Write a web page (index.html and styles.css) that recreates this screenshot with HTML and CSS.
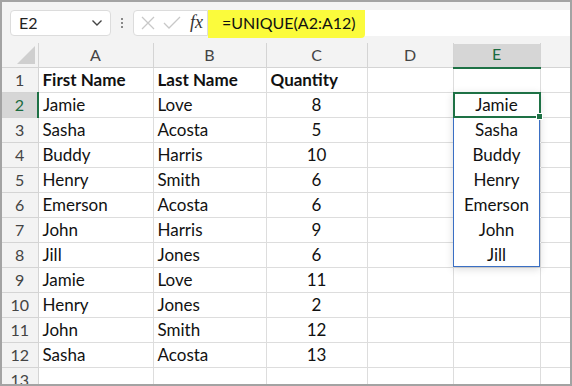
FILE: index.html
```html
<!DOCTYPE html>
<html lang="en">
<head>
    <meta charset="UTF-8">
    <title>UNIQUE spill</title>
    <link rel="stylesheet" href="styles.css">
</head>
<body>
    <div class="frame">
        <div class="toolbar">
            <div class="namebox">
                <span>E2</span>
                <svg class="chev" width="12" height="8" viewBox="0 0 12 8"><path d="M1.5 1.5 L6 6 L10.5 1.5" fill="none" stroke="#444" stroke-width="1.4"/></svg>
            </div>
            <div class="dots"><i></i><i></i><i></i></div>
            <div class="fxbox">
                <svg width="14" height="14" viewBox="0 0 14 14"><path d="M1 1 L13 13 M13 1 L1 13" stroke="#c8c8c8" stroke-width="1.3"/></svg>
                <svg width="18" height="14" viewBox="0 0 18 14"><path d="M1 7 L6 12 L17 1" fill="none" stroke="#c8c8c8" stroke-width="1.3"/></svg>
                <span class="fx">fx</span>
            </div>
            <div class="formula"><span class="hl">=UNIQUE(A2:A12)</span></div>
        </div>
        <div class="sheet">
            <table class="grid">
                <colgroup>
                    <col style="width:36px"><col style="width:115px"><col style="width:113px"><col style="width:101px"><col style="width:86px"><col style="width:87px"><col style="width:32px">
                </colgroup>
                <tr class="heads">
                    <th class="corner"><span class="tri"></span></th><th>A</th><th>B</th><th>C</th><th>D</th><th class="on">E</th><th></th>
                </tr>
                <tr><th>1</th><td class="b">First Name</td><td class="b">Last Name</td><td class="b">Quantity</td><td></td><td></td><td></td></tr>
                <tr><th class="on">2</th><td>Jamie</td><td>Love</td><td class="n">8</td><td></td><td class="n">Jamie</td><td></td></tr>
                <tr><th>3</th><td>Sasha</td><td>Acosta</td><td class="n">5</td><td></td><td class="n sp">Sasha</td><td></td></tr>
                <tr><th>4</th><td>Buddy</td><td>Harris</td><td class="n">10</td><td></td><td class="n sp">Buddy</td><td></td></tr>
                <tr><th>5</th><td>Henry</td><td>Smith</td><td class="n">6</td><td></td><td class="n sp">Henry</td><td></td></tr>
                <tr><th>6</th><td>Emerson</td><td>Acosta</td><td class="n">6</td><td></td><td class="n sp">Emerson</td><td></td></tr>
                <tr><th>7</th><td>John</td><td>Harris</td><td class="n">9</td><td></td><td class="n sp">John</td><td></td></tr>
                <tr><th>8</th><td>Jill</td><td>Jones</td><td class="n">6</td><td></td><td class="n">Jill</td><td></td></tr>
                <tr><th>9</th><td>Jamie</td><td>Love</td><td class="n">11</td><td></td><td></td><td></td></tr>
                <tr><th>10</th><td>Henry</td><td>Jones</td><td class="n">2</td><td></td><td></td><td></td></tr>
                <tr><th>11</th><td>John</td><td>Smith</td><td class="n">12</td><td></td><td></td><td></td></tr>
                <tr><th>12</th><td>Sasha</td><td>Acosta</td><td class="n">13</td><td></td><td></td><td></td></tr>
                <tr><th>13</th><td></td><td></td><td></td><td></td><td></td><td></td></tr>
            </table>
            <div class="spill"></div>
            <div class="active"><span class="handle"></span></div>
        </div>
    </div>
</body>
</html>
```

FILE: styles.css
```css
body {
    margin: 0;
    font-family: 'Lato', 'Open Sans', sans-serif;
    background: #ffffff;
}
.frame {
    width: 572px;
    height: 386px;
    box-sizing: border-box;
    border: 2px solid #a3a3a3;
    background: #f3f3f3;
    overflow: hidden;
}
.toolbar {
    display: flex;
    align-items: center;
    height: 41px;
    padding: 0 0 0 8px;
    box-sizing: border-box;
}
.namebox {
    width: 101px;
    height: 26px;
    box-sizing: border-box;
    background: #fff;
    border: 1px solid #dcdcdc;
    border-radius: 4px;
    display: flex;
    align-items: center;
    justify-content: space-between;
    padding: 0 7px 0 8px;
    font-size: 16px;
    color: #222;
}
.dots {
    width: 22px;
    display: flex;
    flex-direction: column;
    align-items: center;
    gap: 2px;
}
.dots i {
    width: 2px;
    height: 2px;
    background: #888;
}
.fxbox {
    width: 75px;
    height: 26px;
    box-sizing: border-box;
    background: #fff;
    border: 1px solid #dcdcdc;
    border-radius: 4px 0 0 4px;
    display: flex;
    align-items: center;
    gap: 8px;
    padding-left: 7px;
}
.fx {
    font-family: 'Liberation Serif', serif;
    font-style: italic;
    font-size: 18px;
    color: #333;
    margin-left: 1px;
}
.formula {
    flex: 1;
    height: 26px;
    background: #fff;
    display: flex;
    align-items: stretch;
}
.hl {
    background: #fbfb3c;
    padding: 2px 9px 0 14px;
    margin-bottom: -2px;
    border-radius: 0 0 4px 0;
    font-size: 16px;
    color: #111;
    line-height: 22px;
}
.sheet {
    position: relative;
    background: #fff;
}
.grid {
    border-collapse: collapse;
    table-layout: fixed;
    width: 570px;
    font-size: 17px;
    color: #111;
}
.grid th, .grid td {
    height: 25px;
    padding: 0 0 2px 0;
    border-right: 1px solid #dddddd;
    border-bottom: 1px solid #dddddd;
    box-sizing: border-box;
    white-space: nowrap;
    overflow: hidden;
}
.grid td {
    padding-left: 4px;
}
.grid td.sp {
    border-bottom-color: #fff;
}
.grid th {
    background: #f3f3f3;
    font-weight: normal;
    font-size: 16px;
    color: #444;
    border-color: #d4d4d4;
}
.heads th {
    height: 24px;
    border-top: 1px solid #f3f3f3;
    padding-bottom: 3px;
}
.heads th.on {
    background: #d6d6d6;
    color: #1c6b41;
    border-bottom: 2px solid #1e7145;
}
.grid tr th:first-child.on {
    color: #1c6b41;
    background: #d6d6d6;
    border-right: 2px solid #1e7145;
}
.corner {
    position: relative;
}
.tri {
    position: absolute;
    right: 3px;
    bottom: 3px;
    width: 0;
    height: 0;
    border-left: 18px solid transparent;
    border-bottom: 18px solid #cfcfcf;
}
.grid td.b {
    font-weight: bold;
}
.grid td.n {
    text-align: center;
    padding-left: 0;
}
.spill {
    position: absolute;
    left: 451px;
    top: 49px;
    width: 87px;
    height: 175px;
    box-sizing: border-box;
    border: 1px solid #3a6fc4;
    box-shadow: 0 2px 8px rgba(0,0,0,0.15);
}
.active {
    position: absolute;
    left: 451px;
    top: 49px;
    width: 88px;
    height: 26px;
    box-sizing: border-box;
    border: 2px solid #1e7145;
}
.handle {
    position: absolute;
    right: -4px;
    bottom: -4px;
    width: 5px;
    height: 5px;
    background: #1e7145;
    border: 1px solid #fff;
}
```
